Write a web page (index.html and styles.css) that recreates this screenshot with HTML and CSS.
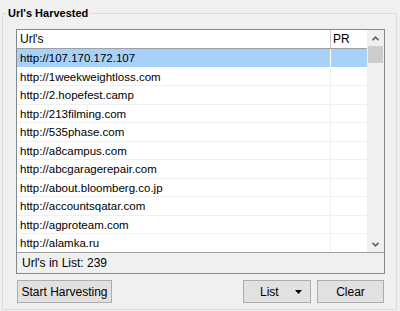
FILE: index.html
```html
<!DOCTYPE html>
<html>
<head>
<meta charset="utf-8">
<link rel="stylesheet" href="styles.css">
</head>
<body>
<fieldset class="group">
  <legend class="title">Url's Harvested</legend>
  <div class="panel">
    <div class="list">
      <div class="grid">
        <div class="row head"><div class="c1">Url's</div><div class="c2">PR</div></div>
        <div class="row sel"><div class="c1">http://107.170.172.107</div><div class="c2"></div></div>
        <div class="row"><div class="c1">http://1weekweightloss.com</div><div class="c2"></div></div>
        <div class="row"><div class="c1">http://2.hopefest.camp</div><div class="c2"></div></div>
        <div class="row"><div class="c1">http://213filming.com</div><div class="c2"></div></div>
        <div class="row"><div class="c1">http://535phase.com</div><div class="c2"></div></div>
        <div class="row"><div class="c1">http://a8campus.com</div><div class="c2"></div></div>
        <div class="row"><div class="c1">http://abcgaragerepair.com</div><div class="c2"></div></div>
        <div class="row"><div class="c1">http://about.bloomberg.co.jp</div><div class="c2"></div></div>
        <div class="row"><div class="c1">http://accountsqatar.com</div><div class="c2"></div></div>
        <div class="row"><div class="c1">http://agproteam.com</div><div class="c2"></div></div>
        <div class="row"><div class="c1">http://alamka.ru</div><div class="c2"></div></div>
      </div>
      <div class="vscroll">
        <div class="arrow"><svg width="7" height="5" viewBox="0 0 7 5"><polyline points="0.5,4.2 3.5,1.2 6.5,4.2" fill="none" stroke="#606060" stroke-width="1.6"/></svg></div>
        <div class="thumb"></div>
        <div class="track"></div>
        <div class="arrow"><svg width="7" height="5" viewBox="0 0 7 5"><polyline points="0.5,0.8 3.5,3.8 6.5,0.8" fill="none" stroke="#606060" stroke-width="1.6"/></svg></div>
      </div>
    </div>
    <div class="status">Url's in List: 239</div>
  </div>
  <div class="buttons">
    <button class="btn start">Start Harvesting</button>
    <div class="spacer"></div>
    <button class="btn listbtn"><span class="lbl">List</span><svg width="7" height="4" viewBox="0 0 7 4"><polygon points="0,0 7,0 3.5,4" fill="#000"/></svg></button>
    <button class="btn clear">Clear</button>
  </div>
</fieldset>
</body>
</html>
```
FILE: styles.css
```css
html, body {
  margin: 0;
  padding: 0;
  background: #f0f0f0;
  width: 400px;
  height: 311px;
  overflow: hidden;
  font-family: "Liberation Sans", Arial, sans-serif;
  font-size: 11px;
  color: #000;
}

.group {
  margin: 6px 0 0 2px;
  width: 395px;
  height: 304px;
  box-sizing: border-box;
  border: 1px solid #dcdcdc;
  padding: 0;
  min-width: 0;
}

.title {
  font-weight: bold;
  font-size: 11px;
  line-height: 14px;
  padding: 0 2px;
  margin-left: 3px;
}

.panel {
  margin: 9px 0 0 13px;
  width: 369px;
  box-sizing: border-box;
  border: 1px solid #828790;
  background: #f0f0f0;
}

.list {
  display: flex;
  height: 222px;
  border-bottom: 1px solid #a0a0a0;
  overflow: hidden;
}

.grid {
  width: 350px;
  background: #fff;
  overflow: hidden;
}

.row {
  display: flex;
  height: 18.5px;
  box-sizing: border-box;
  border-bottom: 1px solid #f0f0f0;
  line-height: 18px;
  font-size: 11.5px;
}

.row .c1 {
  width: 314px;
  box-sizing: border-box;
  padding-left: 3px;
  border-right: 1px solid #f0f0f0;
  white-space: nowrap;
}

.row .c2 {
  width: 36px;
  box-sizing: border-box;
  padding-left: 3px;
}

.row.head {
  height: 19px;
  border-bottom: 1px solid #a0a0a0;
  line-height: 18px;
  font-size: 12px;
}

.row.head .c1 {
  border-right: 1px solid #c8c8c8;
}

.row.head .c2 {
  padding-left: 2px;
}

.row.sel {
  background: #a8d1fa;
  border-bottom-color: #fff;
}

.row.sel .c1 {
  border-right-color: #fff;
}

.vscroll {
  width: 17px;
  display: flex;
  flex-direction: column;
  background: #f0f0f0;
}

.arrow {
  height: 16px;
  display: flex;
  align-items: center;
  justify-content: center;
  flex: none;
}

.thumb {
  height: 17px;
  margin: 0 1px;
  background: #cdcdcd;
  flex: none;
}

.track {
  flex: 1;
}

.status {
  height: 20px;
  line-height: 20px;
  padding-left: 5px;
  font-size: 12px;
}

.buttons {
  display: flex;
  gap: 6px;
  margin: 6px 0 0 14px;
  width: 367px;
}

.spacer {
  flex: 1;
}

.btn {
  height: 23px;
  box-sizing: border-box;
  border: 1px solid #adadad;
  background: #e1e1e1;
  font-family: "Liberation Sans", Arial, sans-serif;
  font-size: 12px;
  color: #000;
  padding: 0;
  margin: 0;
  border-radius: 0;
}

.start {
  width: 95px;
}

.listbtn {
  width: 68px;
  display: flex;
  align-items: center;
  padding: 0 8px 0 16px;
}

.listbtn .lbl {
  flex: 1;
  text-align: left;
}

.clear {
  width: 67px;
}
```
